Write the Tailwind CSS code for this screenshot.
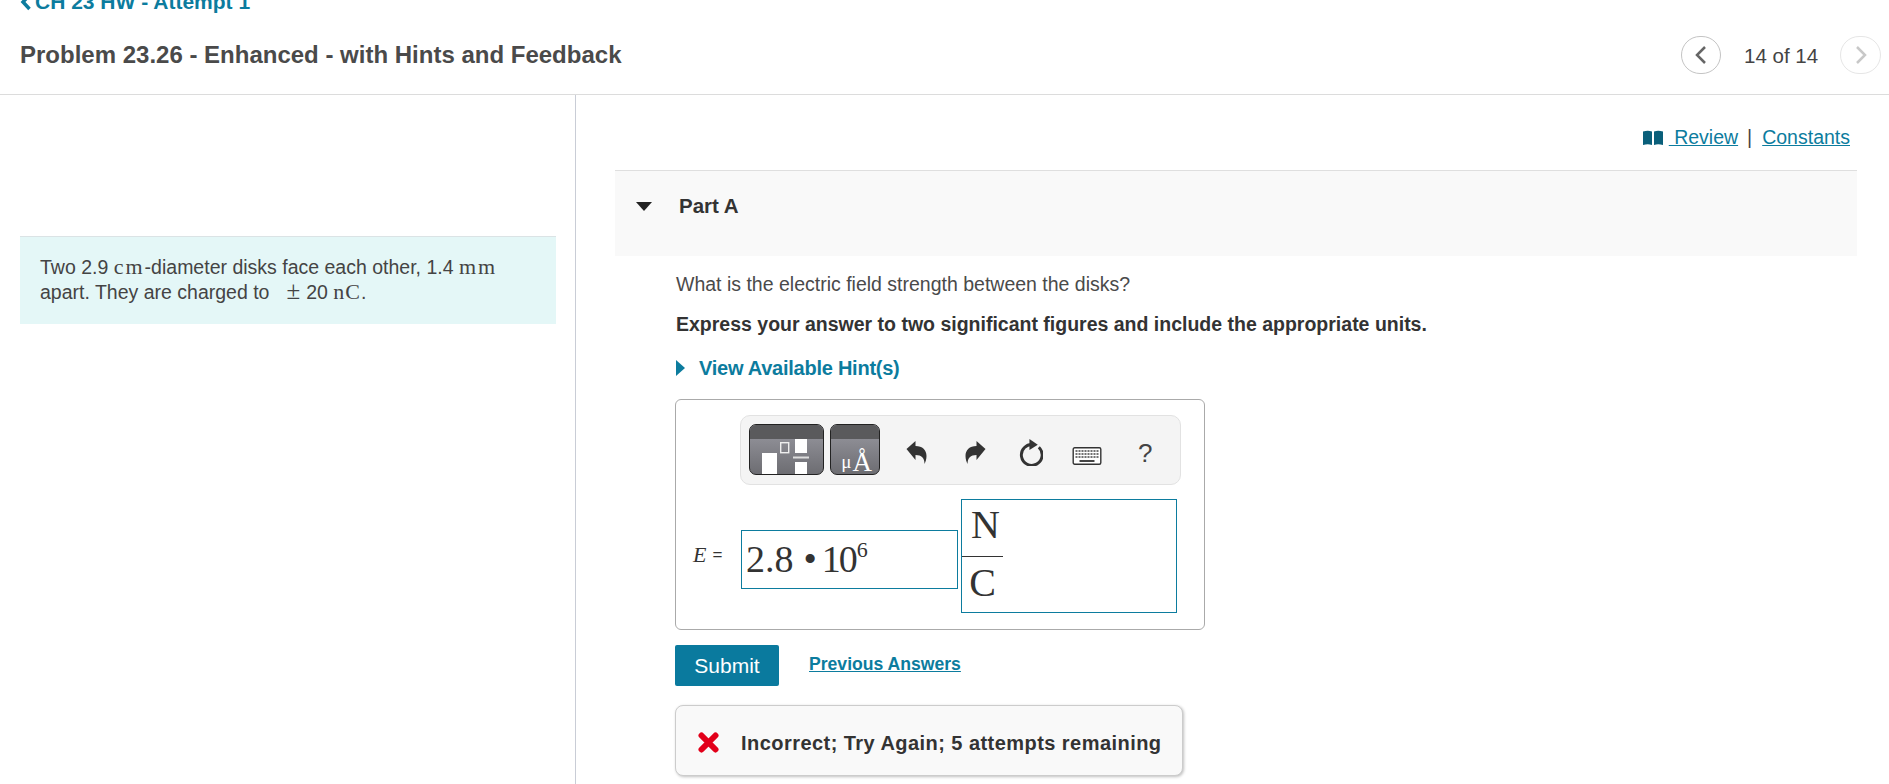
<!DOCTYPE html>
<html>
<head>
<meta charset="utf-8">
<script src="https://cdn.jsdelivr.net/npm/@tailwindcss/browser@4"></script>
</head>
<body class="bg-white font-['Liberation_Sans',Arial,sans-serif] text-[#333]">
<div class="w-[1889px] h-[784px] overflow-hidden flex flex-col">
  <header class="h-[95px] shrink-0 border-b border-[#dcdcdc] px-[20px]">
    <div class="-mt-[9px] h-[22px] flex items-center gap-[4px] text-[#0c7c9e] font-bold text-[21px] leading-[22px]">
      <svg class="w-[11px] h-[18px]" viewBox="0 0 11 18"><path d="M9.5 2L3 9l6.500 7" fill="none" stroke="#0c7c9e" stroke-width="3.500"/></svg>
      <a>CH 23 HW - Attempt 1</a>
    </div>
    <div class="mt-[22px] h-[40px] flex items-center">
      <h1 class="font-bold text-[24px] text-[#4a4a4a] leading-[40px]">Problem 23.26 - Enhanced - with Hints and Feedback</h1>
      <div class="ml-auto -mr-[12px] flex items-center">
        <div class="w-[40px] h-[38px] rounded-full border border-[#c4c4c4] flex items-center justify-center">
          <svg class="w-[14px] h-[20px]" viewBox="0 0 14 20"><path d="M11 2L3 10l8 8" fill="none" stroke="#666" stroke-width="2.500"/></svg>
        </div>
        <span class="ml-[23px] w-[96px] text-[20.500px] text-[#444] pt-[2px]">14 of 14</span>
        <div class="w-[41px] h-[38px] rounded-full border border-[#e6e6e6] flex items-center justify-center">
          <svg class="w-[14px] h-[20px]" viewBox="0 0 14 20"><path d="M3 2l8 8-8 8" fill="none" stroke="#c8c8c8" stroke-width="2.500"/></svg>
        </div>
      </div>
    </div>
  </header>
  <main class="flex flex-1 min-h-0">
    <section class="w-[576px] shrink-0 border-r border-[#c9cdd6] pt-[141px] pl-[20px] pr-[19px]">
      <div class="h-[88px] bg-[#e4f7f7] border-t border-[#dbe3e5] px-[20px] pt-[18px] text-[19.500px] leading-[25px] text-[#444]">
        Two 2.9 <span class="font-['Liberation_Serif',serif] tracking-[2px] text-[22px] leading-[20px]">cm</span>-diameter disks face each other, 1.4 <span class="font-['Liberation_Serif',serif] tracking-[2px] text-[22px] leading-[20px]">mm</span><br>
        apart. They are charged to<span class="font-['Liberation_Serif',serif] text-[25px] leading-[20px] ml-[17px] mr-[6px]">±</span>20 <span class="font-['Liberation_Serif',serif] tracking-[1px] text-[22px] leading-[20px]">nC</span>.
      </div>
    </section>
    <section class="flex-1 pl-[39px] pr-[32px] pt-[30px]">
      <div class="h-[24px] flex items-center justify-end pr-[7px] text-[19.500px] leading-[24px] text-[#0c7c9e]">
        <svg class="w-[20px] h-[15px] mr-[6px]" viewBox="0 0 20 15"><path d="M0 1.500q5-1.500 9 0V15q-4-1.500-9 0zM11 1.500q4-1.500 9 0V15q-5-1.500-9 0z" fill="#0a5f7a"/></svg>
        <a class="underline">&nbsp;Review</a>
        <span class="ml-[9px] mr-[10px] text-[#444]">|</span>
        <a class="underline">Constants</a>
      </div>
      <div class="mt-[21px] h-[86px] bg-[#f9f9f9] border-t border-[#dfdfdf] pl-[21px] pt-[23px] flex items-start">
        <svg class="w-[16px] h-[9px] mt-[8px]" viewBox="0 0 16 9"><path d="M0 0h16L8 9z" fill="#222"/></svg>
        <span class="ml-[27px] font-bold text-[20.500px] leading-[24px] text-[#333]">Part A</span>
      </div>
      <div class="ml-[61px]">
        <p class="mt-[16px] text-[19.500px] leading-[24px] text-[#4a4a4a]">What is the electric field strength between the disks?</p>
        <p class="mt-[16px] font-bold text-[19.500px] leading-[24px] text-[#333]">Express your answer to two significant figures and include the appropriate units.</p>
        <div class="mt-[20px] h-[24px] flex items-center text-[#0c7c9e] font-bold text-[20px] leading-[24px] tracking-[-0.250px]">
          <svg class="w-[9px] h-[16px] mr-[14px]" viewBox="0 0 9 16"><path d="M0 0l9 8-9 8z" fill="#0c7c9e"/></svg>
          <a>View Available Hint(s)</a>
        </div>
        <div class="mt-[19px] -ml-[1px] w-[530px] h-[231px] rounded-[6px] border border-[#aaa]">
          <div class="ml-[64px] mt-[15px] w-[441px] h-[70px] rounded-[10px] border border-[#e2e2e2] bg-[#f4f4f4] pl-[8px] pt-[8px] flex items-start">
            <div class="w-[75px] h-[51px] rounded-[7px] border border-[#222] overflow-hidden bg-linear-to-b from-[#9a9aa2] to-[#6d6d72]">
              <div class="h-[14px] bg-[#5a5a5c]"></div>
              <svg class="w-[73px] h-[35px]" viewBox="0 0 73 35"><path d="M12 14h15v21H12zM45 0h12v14H45zM45 23h12v12H45z" fill="#fff"/><path d="M43 17.500h16v2H43z" fill="#ddd"/><rect x="30.700" y="3.700" width="8" height="10" fill="none" stroke="#eee" stroke-width="1.400"/></svg>
            </div>
            <div class="ml-[6px] w-[50px] h-[51px] rounded-[7px] border border-[#222] overflow-hidden bg-linear-to-b from-[#9a9aa2] to-[#6d6d72]">
              <div class="h-[14px] bg-[#5a5a5c]"></div>
              <div class="h-[35px] flex items-end justify-end pr-[7px] font-['Liberation_Serif',serif] text-white leading-[24px]"><span class="text-[19px] mr-[1px]">μ</span><span class="text-[27px]">Å</span></div>
            </div>
            <div class="ml-[26px] mt-[15px] flex items-center text-[#333]">
              <svg class="w-[21px] h-[24px]" viewBox="0 0 20 24"><path d="M0 8l9-8v5c7 0 11 4 11 10 0 3-1 6-2 8 0-6-3-9-9-9v5z" fill="#333"/></svg>
              <svg class="ml-[38px] w-[21px] h-[24px]" viewBox="0 0 20 24"><path d="M20 8l-9-8v5C4 5 0 9 0 15c0 3 1 6 2 8 0-6 3-9 9-9v5z" fill="#333"/></svg>
              <svg class="ml-[32px] w-[25px] h-[27px]" viewBox="0 0 24 26"><path d="M15 5.500A10 10 0 1 0 20 8" fill="none" stroke="#333" stroke-width="2.800"/><path d="M11 0l8 5.500-8 5z" fill="#333"/></svg>
              <svg class="ml-[29px] w-[30px] h-[18px] mt-[6px]" viewBox="0 0 29 18"><rect x=".7" y=".7" width="27.600" height="16.600" rx="1.500" fill="#fff" stroke="#333" stroke-width="1.400"/><path d="M3 4h23M3 7h23M3 10h23" stroke="#444" stroke-width="1.600" stroke-dasharray="2 1"/><path d="M7 14h15" stroke="#444" stroke-width="2"/></svg>
              <span class="ml-[36px] text-[26px] leading-[26px] text-[#444]">?</span>
            </div>
          </div>
          <div class="mt-[14px] pl-[17px] flex items-start font-['Liberation_Serif',serif] text-[#333]">
            <div class="mt-[44px] w-[48px] h-[24px] flex items-center gap-[6px] text-[22px] leading-[24px]"><i>E</i><span class="font-['Liberation_Sans',sans-serif] text-[17px]">=</span></div>
            <div class="mt-[31px] w-[217px] h-[59px] border border-[#0c7c9e] pl-[4px] text-[38px] leading-[56px] whitespace-nowrap">2.8<span class="ml-[10px]">•</span><span class="ml-[5px] tracking-[-2px]">10</span><span class="ml-[1px] text-[22px] align-[15px] leading-[0]">6</span></div>
            <div class="ml-[3px] w-[216px] h-[114px] border border-[#0c7c9e] text-[40px] leading-[48px]">
              <div class="w-[41px] text-center pl-[6px] border-b border-[#333] h-[57px] leading-[50px]">N</div>
              <div class="w-[41px] text-center leading-[52px]">C</div>
            </div>
          </div>
        </div>
        <div class="mt-[15px] -ml-[1px] flex items-center">
          <button class="w-[104px] h-[41px] rounded-[2px] bg-[#0a7a9e] text-white text-[21px]">Submit</button>
          <a class="ml-[30px] font-bold text-[17.600px] text-[#0c7c9e] underline -mt-[3px]">Previous Answers</a>
        </div>
        <div class="mt-[19px] -ml-[1px] w-[508px] h-[71px] rounded-[8px] border border-[#ccc] bg-[#f9f9f9] shadow-[1px_1px_3px_rgba(0,0,0,0.25)] pl-[22px] pt-[4px] flex items-center">
          <svg class="w-[21px] h-[21px] mr-[1px]" viewBox="0 0 21 21"><path d="M3.500 3.500l14 14M17.500 3.500l-14 14" stroke="#e2001a" stroke-width="6" stroke-linecap="round"/></svg>
          <span class="ml-[21px] font-bold text-[20px] text-[#333] tracking-[0.450px]">Incorrect; Try Again; 5 attempts remaining</span>
        </div>
      </div>
    </section>
  </main>
</div>
</body>
</html>
